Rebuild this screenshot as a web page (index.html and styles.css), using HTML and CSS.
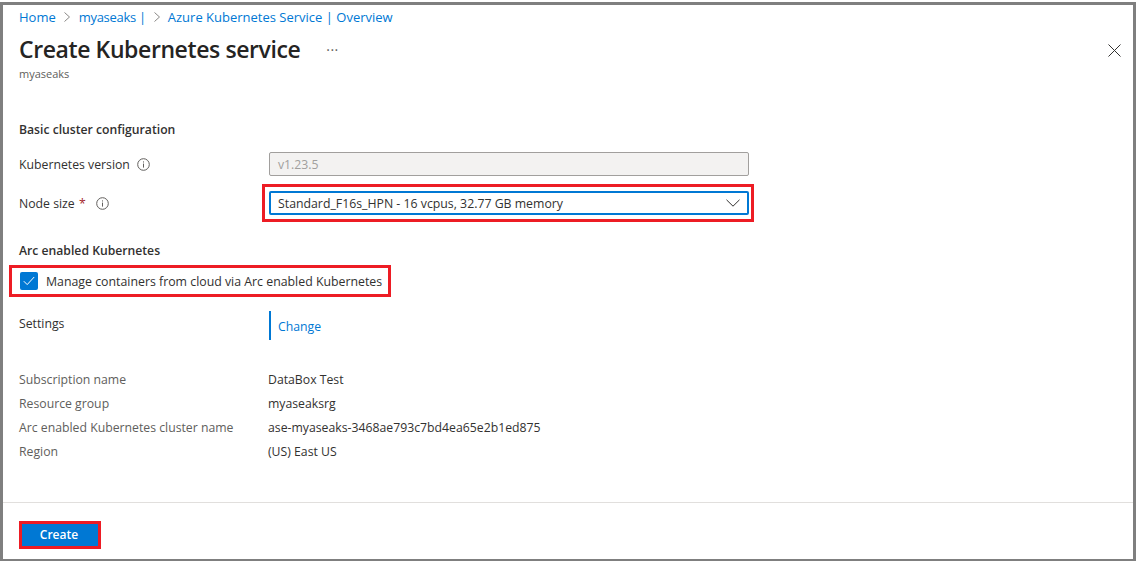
FILE: index.html
```html
<!DOCTYPE html>
<html lang="en">
<head>
<meta charset="utf-8">
<title>Create Kubernetes service</title>
<link rel="stylesheet" href="styles.css">
</head>
<body>
<div class="frame">
  <nav class="crumbs">
    <a>Home</a>
    <svg class="sep" width="8" height="12" viewBox="0 0 8 12"><path d="M1.5 1.5 6.5 6 1.5 10.5" fill="none" stroke="#8a8886"/></svg>
    <a class="crumb-tight">myaseaks |</a>
    <svg class="sep" width="8" height="12" viewBox="0 0 8 12"><path d="M1.5 1.5 6.5 6 1.5 10.5" fill="none" stroke="#8a8886"/></svg>
    <a>Azure Kubernetes Service | Overview</a>
  </nav>
  <header class="head">
    <div class="title-row">
      <h1>Create Kubernetes service</h1>
      <span class="more">&middot;&middot;&middot;</span>
      <svg class="close" width="13" height="13" viewBox="0 0 13 13"><path d="M.5.5l12 12M12.5.5l-12 12" fill="none" stroke="#323130"/></svg>
    </div>
    <div class="sub">myaseaks</div>
  </header>
  <main class="content">
    <h2 class="sec-basic">Basic cluster configuration</h2>
    <div class="field-row version-row">
      <label class="lbl">Kubernetes version
        <svg class="info" width="13" height="13" viewBox="0 0 13 13"><circle cx="6.5" cy="6.5" r="5.8" fill="none" stroke="#605e5c"/><path d="M6.5 5.6v4M6.5 3.4v1.1" stroke="#605e5c"/></svg>
      </label>
      <div class="input disabled">v1.23.5</div>
    </div>
    <div class="field-row node-row">
      <label class="lbl">Node size <span class="req">*</span>
        <svg class="info info-wide" width="13" height="13" viewBox="0 0 13 13"><circle cx="6.5" cy="6.5" r="5.8" fill="none" stroke="#605e5c"/><path d="M6.5 5.6v4M6.5 3.4v1.1" stroke="#605e5c"/></svg>
      </label>
      <div class="input select">
        <span>Standard_F16s_HPN - 16 vcpus, 32.77 GB memory</span>
        <svg width="14" height="8" viewBox="0 0 14 8"><path d="M.5.8 7 7.2 13.5.8" fill="none" stroke="#323130"/></svg>
      </div>
    </div>
    <h2 class="sec-arc">Arc enabled Kubernetes</h2>
    <div class="check-row">
      <span class="check"><svg width="12" height="10" viewBox="0 0 12 10"><path d="M.8 5.2 4.2 8.6 11.2 1" fill="none" stroke="#fff"/></svg></span>
      <span class="check-text">Manage containers from cloud via Arc enabled Kubernetes</span>
    </div>
    <div class="settings-row">
      <span class="lbl">Settings</span>
      <div class="change"><a>Change</a></div>
    </div>
    <dl class="summary">
      <dt>Subscription name</dt><dd>DataBox Test</dd>
      <dt>Resource group</dt><dd>myaseaksrg</dd>
      <dt>Arc enabled Kubernetes cluster name</dt><dd>ase-myaseaks-3468ae793c7bd4ea65e2b1ed875</dd>
      <dt>Region</dt><dd>(US) East US</dd>
    </dl>
  </main>
  <footer class="foot">
    <button class="create">Create</button>
  </footer>
</div>
</body>
</html>
```
FILE: styles.css
```css
* { box-sizing: border-box; }
html, body { margin: 0; padding: 0; }
body {
  width: 1137px;
  height: 561px;
  overflow: hidden;
  background: #fff;
  font-family: "Open Sans", "Noto Sans", sans-serif;
  font-size: 12.25px;
  color: #323130;
  padding-top: 2px;
  padding-right: 1px;
}
.frame {
  height: 559px;
  border: solid #7f7f7f;
  border-width: 3px 3px 2px 3px;
  display: flex;
  flex-direction: column;
}
.crumbs {
  height: 24px;
  padding-left: 16px;
  display: flex;
  align-items: center;
  gap: 7px;
  font-size: 13px;
  color: #0078d4;
}
.crumb-tight { margin-left: 1px; letter-spacing: -.3px; }
.sep { flex: none; }
.head { padding-left: 16px; }
.title-row {
  height: 34px;
  margin-top: 3px;
  display: flex;
  align-items: center;
}
h1 {
  margin: 0;
  font-size: 23px;
  font-weight: 600;
  letter-spacing: -.4px;
  color: #252423;
}
.more { margin-left: 26px; font-size: 14px; letter-spacing: .4px; color: #605e5c; }
.close { margin-left: auto; margin-right: 12px; margin-top: 3px; }
.sub { margin-top: 0; font-size: 11px; color: #605e5c; }
.content { flex: 1; padding-left: 16px; }
h2 { margin: 0; font-size: 12.2px; font-weight: 600; }
.sec-basic { margin-top: 41px; line-height: 16px; }
.field-row { display: flex; align-items: center; }
.version-row { margin-top: 14px; }
.node-row { margin-top: 15px; position: relative; }
.node-row::after {
  content: "";
  box-sizing: border-box;
  position: absolute;
  left: 243px;
  top: -7px;
  width: 492px;
  height: 38px;
  border: 3px solid #ed1c24;
}
.lbl { width: 250px; display: block; }
.info { vertical-align: -2px; margin-left: 4px; }
.info-wide { margin-left: 7px; }
.req { color: #a4262c; margin-left: 1px; }
.input {
  width: 480px;
  height: 24px;
  padding: 0 8px;
  display: flex;
  align-items: center;
  border-radius: 2px;
}
.disabled { background: #f3f2f1; border: 1px solid #a19f9d; color: #a19f9d; }
.select { border: 2px solid #0078d4; padding-left: 7px; padding-right: 7px; justify-content: space-between; font-size: 12.3px; }
.sec-arc { margin-top: 28px; line-height: 16px; }
.check-row {
  margin-left: -10px;
  margin-top: 6px;
  width: 382px;
  height: 32px;
  padding-left: 8px;
  display: flex;
  align-items: center;
  gap: 8px;
  border: 3px solid #ed1c24;
}
.check {
  width: 18px;
  height: 18px;
  background: #0078d4;
  border-radius: 2px;
  display: flex;
  align-items: center;
  justify-content: center;
}
.check-text { white-space: nowrap; font-size: 12.33px; }
.settings-row { display: flex; margin-top: 14px; height: 29px; }
.settings-row .lbl { line-height: 26px; }
.change {
  border-left: 2px solid #0078d4;
  padding-left: 7px;
  line-height: 31px;
  color: #0078d4;
}
.summary {
  margin: 27px 0 0;
  display: grid;
  grid-template-columns: 249px 1fr;
  grid-auto-rows: 24px;
  align-items: center;
}
dt { color: #605e5c; }
dd { margin: 0; color: #323130; }
.foot {
  height: 57px;
  border-top: 1px solid #e1dfdd;
  padding: 18px 0 0 16px;
}
.create {
  display: block;
  width: 82px;
  height: 28px;
  padding: 0 2px 2px 0;
  background: #0078d4;
  border: 3px solid #ed1c24;
  color: #fff;
  font: 600 12px "Open Sans", "Noto Sans", sans-serif;
}
```
